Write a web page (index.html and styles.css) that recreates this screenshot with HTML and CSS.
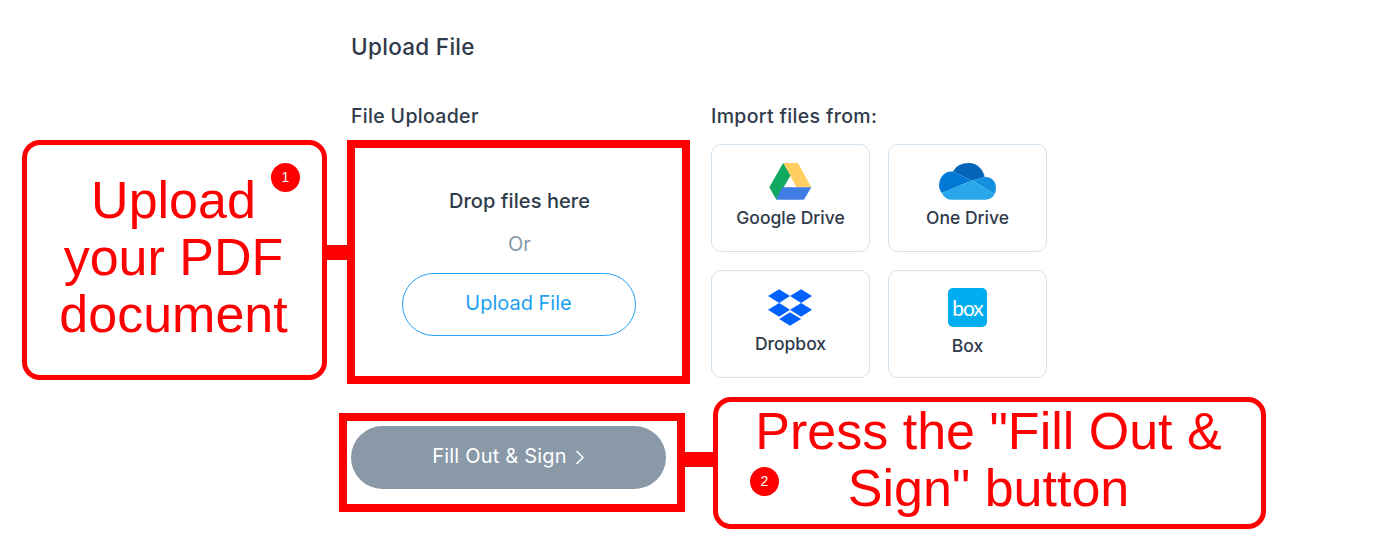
FILE: index.html
```html
<!DOCTYPE html>
<html lang="en">
<head>
<meta charset="utf-8">
<title>Upload File</title>
<link rel="stylesheet" href="styles.css">
</head>
<body>
<main class="page">
  <h1 class="title">Upload File</h1>
  <div class="columns">
    <section>
      <h2 class="label">File Uploader</h2>
      <div class="drop">
        <p class="drop-title">Drop files here</p>
        <p class="drop-or">Or</p>
        <button class="btn-upload">Upload File</button>
      </div>
    </section>
    <section>
      <h2 class="label">Import files from:</h2>
      <div class="cards">
        <div class="card card-drive">
          <svg class="icon-drive" viewBox="207 98 126 110"><path fill="#ffcf63" d="M248 98h44l40 72h-44z"/><path fill="#11a861" d="M248 98l-41 72 21 37 42-72z"/><path fill="#3f7de4" d="M245 170h87l-22 37h-82z"/></svg>
          <span>Google Drive</span>
        </div>
        <div class="card card-drive">
          <svg class="icon-cloud" viewBox="717 98 169 110"><path fill="#0364b8" d="M758 124C768 106 785 98 805 98c25 0 42 18 48 42l-38 10z"/><path fill="#0078d4" d="M758 124c-22-4-41 16-41 41 0 9 3 16 8 22l90-37z"/><path fill="#1490df" d="M815 150l38-10c18-2 33 12 33 30 0 8-1 14-4 20z"/><path fill="#28a8ea" d="M725 187l90-37 67 40c-5 11-15 17-27 17H752c-11 0-20-7-27-20z"/></svg>
          <span>One Drive</span>
        </div>
        <div class="card card-drop">
          <svg class="icon-dropbox" viewBox="205 477 130 108"><path fill="#0061ff" d="M205 497l33-20 32 20-32 21zM270 497l33-20 32 20-32 21zM205 538l33-20 32 20-32 20zM270 538l33-20 32 20-32 20zM238 565l32-20 33 20-33 20z"/></svg>
          <span>Dropbox</span>
        </div>
        <div class="card card-box">
          <div class="icon-box">box</div>
          <span>Box</span>
        </div>
      </div>
    </section>
  </div>
  <button class="btn-fill">Fill Out &amp; Sign <svg class="chevron" viewBox="0 0 10 16"><path d="M1.500 1.500L8 8l-6.500 6.500"/></svg></button>
</main>

<div class="frame frame-drop"></div>
<div class="frame frame-fill"></div>
<div class="link link-one"></div>
<div class="link link-two"></div>
<div class="callout callout-one">Upload<br>your PDF<br>document<span class="badge badge-one">1</span></div>
<div class="callout callout-two">Press the "Fill Out &amp;<br>Sign" button<span class="badge badge-two">2</span></div>
</body>
</html>
```
FILE: styles.css
```css
* { box-sizing: border-box; }
html, body { margin: 0; background: #fff; }
body { font-family: Inter, "Noto Sans", sans-serif; color: #2f3a4a; height: 542px; overflow: hidden; }
.page { padding: 33px 0 0 351px; }
.title { margin: 0 0 44px; font-size: 22.500px; line-height: 28px; font-weight: 500; letter-spacing: .3px; }
.columns { display: grid; grid-template-columns: 335px 336px; column-gap: 25px; }
.label { margin: 0 0 15px; font-size: 19.500px; line-height: 23px; padding-bottom: 1px; font-weight: 500; letter-spacing: .33px; }
.drop { height: 236px; display: flex; flex-direction: column; align-items: center; padding-top: 43px; }
.drop-title { margin: 0 0 0 2px; font-size: 20px; line-height: 28px; font-weight: 500; letter-spacing: .08px; }
.drop-or { margin: 15px 0 0 2px; font-size: 20px; line-height: 28px; color: #8a99a8; }
.btn-upload { margin-top: 15px; width: 234px; height: 63px; padding: 0 0 3px; border: 1px solid #1da1f2; border-radius: 32px; background: #fff; color: #1da1f2; font: 400 20px Inter, sans-serif; }
.cards { display: grid; grid-template-columns: 159px 159px; grid-auto-rows: 108px; gap: 18px; }
.card { border: 1px solid #d3e2ef; border-radius: 10px; display: flex; flex-direction: column; align-items: center; font-size: 17.500px; font-weight: 500; line-height: 22px; }
.card-drive { padding-top: 18px; gap: 7px; }
.card-drop { padding-top: 18px; gap: 7px; }
.card-box { padding-top: 17px; gap: 8px; }
.icon-drive { width: 43px; height: 37px; display: block; }
.icon-cloud { width: 57px; height: 37px; display: block; }
.icon-dropbox { width: 44px; height: 37px; display: block; margin-left: -2px; }
.icon-box { width: 39px; height: 39px; border-radius: 5px; background: #00aeef; color: #fff; font: 400 21px/39px Lato, sans-serif; letter-spacing: -1px; text-align: center; }
.btn-fill { margin-top: 46px; width: 315px; height: 63px; padding: 0 0 3px; border: 0; border-radius: 32px; background: #8a99a8; color: #fff; font: 400 20px Inter, sans-serif; letter-spacing: .2px; display: flex; align-items: center; justify-content: center; gap: 8px; }
.chevron { width: 10px; height: 17px; margin-top: 3px; fill: none; stroke: #fff; stroke-width: 1.500; }
.frame { position: absolute; border: 8px solid #f00; }
.frame-drop { left: 347px; top: 140px; width: 343px; height: 244px; }
.frame-fill { left: 339px; top: 413px; width: 346px; height: 99px; }
.link { position: absolute; background: #f00; height: 15px; }
.link-one { left: 325px; top: 245px; width: 24px; }
.link-two { left: 683px; top: 452px; width: 32px; }
.callout { position: absolute; border: 5px solid #f00; border-radius: 18px; background: #fff; color: #f00; font-family: "Liberation Sans", Arial, sans-serif; font-size: 52px; line-height: 57px; display: flex; align-items: center; justify-content: center; text-align: center; padding: 0 2px 6px 0; }
.callout-one { left: 22px; top: 140px; width: 305px; height: 240px; }
.callout-two { left: 713px; top: 397px; width: 553px; height: 132px; }
.badge { position: absolute; width: 29px; height: 29px; border-radius: 50%; background: #f00; color: #fff; font-size: 14px; line-height: 29px; }
.badge-one { left: 244px; top: 18px; }
.badge-two { left: 32px; top: 65px; }
```
